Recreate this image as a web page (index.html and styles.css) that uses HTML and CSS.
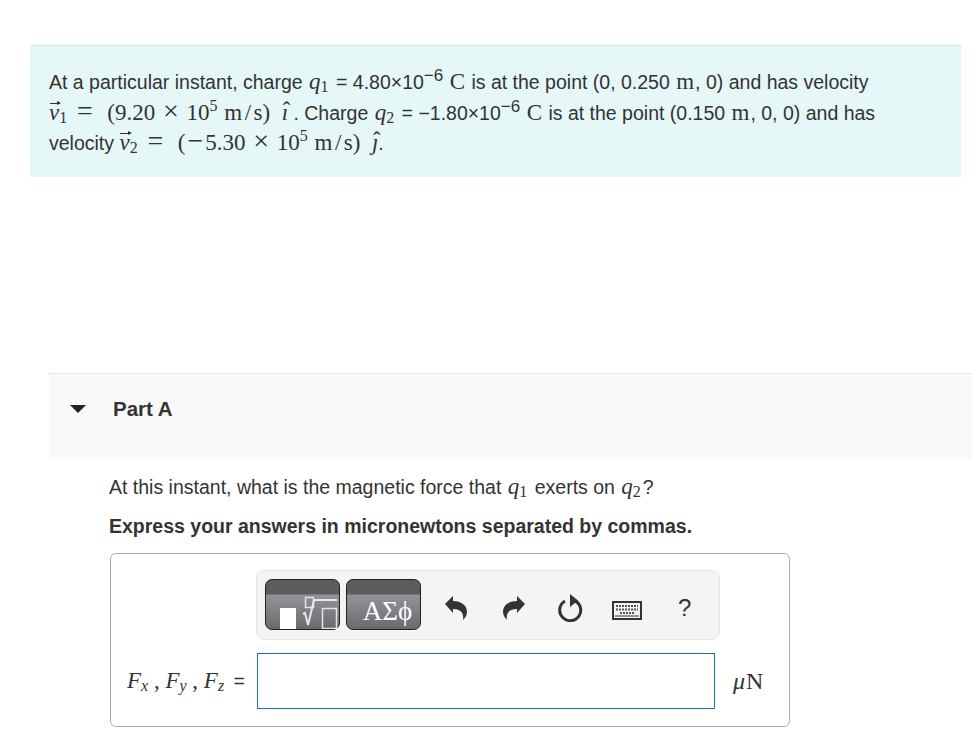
FILE: index.html
```html
<!DOCTYPE html>
<html lang="en">
<head>
    <meta charset="UTF-8">
    <meta name="viewport" content="width=device-width, initial-scale=1.0">
    <title>Part A - Magnetic force</title>
    <link rel="stylesheet" href="styles.css">
</head>
<body>
    <!-- Problem statement -->
    <section class="intro">
        <p>At a particular instant, charge <span class="math var"><i>q</i><sub>1</sub></span> = 4.80×10<sup class="exp">−6</sup> <span class="math symbol">C</span> is at the point (0, 0.250 <span class="math symbol">m</span>, 0) and has velocity<br>
        <span class="math"><span class="vec"><i>v</i></span><sub>1</sub> <span class="op eq">=</span> &nbsp;(9.20 <span class="op">×</span> 10<sup>5</sup> m<span class="slash">/</span>s) &nbsp;<span class="hat"><i>ı</i></span></span> . Charge <span class="math var"><i>q</i><sub>2</sub></span> = −1.80×10<sup class="exp">−6</sup> <span class="math symbol">C</span> is at the point (0.150 <span class="math symbol">m</span>, 0, 0) and has<br>
        velocity <span class="math"><span class="vec"><i>v</i></span><sub>2</sub> <span class="op eq">=</span> &nbsp;(<span class="op">−</span>5.30 <span class="op">×</span> 10<sup>5</sup> m<span class="slash">/</span>s) &nbsp;<span class="hat"><i>ȷ</i></span></span>.</p>
    </section>

    <section class="part">
        <header class="part-head">
            <span class="caret"></span>
            <h2>Part A</h2>
        </header>

        <div class="part-body">
            <p class="question">At this instant, what is the magnetic force that <span class="math var"><i>q</i><sub>1</sub></span> exerts on <span class="math var"><i>q</i><sub>2</sub></span>?</p>
            <p class="instructions">Express your answers in micronewtons separated by commas.</p>

            <div class="answer-box">
                <div class="toolbar">
                    <button class="palette" type="button" aria-label="Templates">
                        <svg width="73" height="37" viewBox="0 0 73 37">
                            <rect x="14" y="16" width="16" height="21" fill="#fff"/>
                            <rect x="39.500" y="5.500" width="8" height="10" fill="none" stroke="#e4e4e4" stroke-width="1.5"/>
                            <path d="M37 22l2-1 3 12 6-25h23" fill="none" stroke="#e8e8e8" stroke-width="2"/>
                            <rect x="56.500" y="16.500" width="14" height="20" fill="none" stroke="#e4e4e4" stroke-width="1.5"/>
                        </svg>
                    </button>
                    <button class="palette" type="button"><span class="symbols">ΑΣϕ</span></button>

                    <div class="tools">
                        <svg class="tool" width="24" height="26" viewBox="0 0 24 26" aria-label="Undo">
                            <path d="M1 9L9 1v5c8 0 14 4 14 11 0 3-2 6-4 8 1-6-1-11-10-11v4z" fill="#333"/>
                        </svg>
                        <svg class="tool redo" width="24" height="26" viewBox="0 0 24 26" aria-label="Redo">
                            <path d="M23 9L15 1v5C7 6 1 10 1 17c0 3 2 6 4 8-1-6 1-11 10-11v4z" fill="#333"/>
                        </svg>
                        <svg class="tool" width="26" height="28" viewBox="0 0 26 28" aria-label="Reset">
                            <path d="M8 7a10.500 10.500 0 1 0 8-1" fill="none" stroke="#333" stroke-width="3"/>
                            <path d="M13 0l8 6.500-8 6.500z" fill="#333"/>
                        </svg>
                        <svg class="tool keyboard" width="30" height="20" viewBox="0 0 30 20" aria-label="Keyboard">
                            <rect x="1" y="1" width="28" height="17" fill="#f3f3f3" stroke="#333" stroke-width="2"/>
                            <path d="M4 5h22M4 8.500h22M8 12h14" stroke="#555" stroke-width="2" stroke-dasharray="2 1"/>
                            <path d="M3 15h24" stroke="#333"/>
                        </svg>
                        <span class="help">?</span>
                    </div>
                </div>

                <div class="answer-row">
                    <label class="answer-label" for="answer"><span class="math"><i>F<sub>x</sub></i> , <i>F<sub>y</sub></i> , <i>F<sub>z</sub></i></span> <span class="label-eq">=</span></label>
                    <input class="answer-input" id="answer" type="text">
                    <span class="math unit"><i>μ</i>N</span>
                </div>
            </div>
        </div>
    </section>
</body>
</html>
```

FILE: styles.css
```css
html, body {
    overflow: hidden;
}
body {
    font-family: "Liberation Sans", Arial, sans-serif;
    font-size: 19.5px;
    margin: 0;
    padding: 45px 0 0 30px;
    background: white;
    color: #333;
}
p {
    margin: 0;
}
.math {
    font-family: "Liberation Serif", "Times New Roman", serif;
    font-size: 23px;
}
.math sub {
    font-size: 16px;
    line-height: 0;
    vertical-align: -3px;
}
.math sup {
    font-size: 16px;
    line-height: 0;
    margin-right: 1px;
}
.var {
    margin: 0 2px 0 1px;
}
.symbol {
    margin: 0 1px;
}
.op {
    font-size: 28px;
    line-height: 0;
    margin: 0 2px;
}
.eq {
    margin: 0 3px 0 4px;
}
.slash {
    margin: 0 2.500px;
}
.exp {
    font-size: 17px;
    line-height: 0;
    vertical-align: 8px;
}
.vec, .hat {
    position: relative;
    display: inline-block;
}
.vec::before {
    content: "";
    position: absolute;
    left: 1px;
    top: 5px;
    width: 10px;
    height: 1px;
    background: #333;
}
.vec::after {
    content: "";
    position: absolute;
    right: -2px;
    top: 3px;
    border-left: 4px solid #333;
    border-top: 2.500px solid transparent;
    border-bottom: 2.500px solid transparent;
}
.hat::before {
    content: "ˆ";
    position: absolute;
    left: 1px;
    top: -2px;
}
.intro {
    width: 931px;
    height: 132px;
    box-sizing: border-box;
    border-top: 1px solid #dfe3e6;
    background: #e6f7f7;
    padding: 21px 19px 0;
    line-height: 30.500px;
}
.part {
    margin: 196px 0 0 19px;
}
.part-head {
    display: flex;
    align-items: center;
    height: 86px;
    padding: 0 0 15px 21px;
    box-sizing: border-box;
    border-top: 1px solid #e4e4e4;
    background: #f9f9f9;
}
.part-head h2 {
    margin: 0 0 0 27px;
    font-size: 20.5px;
    font-weight: bold;
}
.caret {
    width: 0;
    height: 0;
    border-left: 8px solid transparent;
    border-right: 8px solid transparent;
    border-top: 8px solid #222;
}
.part-body {
    padding: 15px 0 0 60px;
}
.question {
    line-height: 26px;
}
.instructions {
    margin-top: 13px;
    font-weight: bold;
    line-height: 26px;
}
.answer-box {
    width: 680px;
    height: 174px;
    box-sizing: border-box;
    margin: 14px 0 0 1px;
    padding: 16px 0 0 145px;
    border: 1px solid #aaa;
    border-radius: 6px;
}
.toolbar {
    display: flex;
    gap: 6px;
    width: 464px;
    height: 70px;
    box-sizing: border-box;
    padding: 8px 0 0 8px;
    background: #f4f4f4;
    border: 1px solid #e6e6e6;
    border-radius: 8px;
}
.palette {
    width: 75px;
    height: 51px;
    padding: 0;
    display: flex;
    align-items: flex-end;
    justify-content: center;
    border: 1px solid #222;
    border-radius: 7px;
    background: linear-gradient(#5c5c5c 0, #5c5c5c 14px, #92929a 15px, #6a6a6e 100%);
}
.symbols {
    font-family: "Liberation Serif", serif;
    font-size: 27px;
    color: white;
    line-height: 35px;
    padding-left: 8px;
}
.tools {
    display: flex;
    align-items: center;
    gap: 31px;
    margin: 3px 0 0 17px;
    height: 51px;
}
.tool {
    display: block;
}
.redo {
    margin-left: 3px;
}
.keyboard {
    margin: 7px 0 0 -2px;
}
.help {
    margin-left: 5px;
    font-size: 24px;
    color: #333;
}
.answer-row {
    display: flex;
    align-items: center;
    margin: 13px 0 0 -129px;
}
.answer-label {
    width: 130px;
    white-space: nowrap;
}
.label-eq {
    margin-left: 4px;
}
.answer-input {
    width: 458px;
    height: 56px;
    box-sizing: border-box;
    border: 1px solid #16779b;
    background: white;
}
.unit {
    margin-left: 18px;
    font-size: 24px;
    letter-spacing: 1px;
}
```
